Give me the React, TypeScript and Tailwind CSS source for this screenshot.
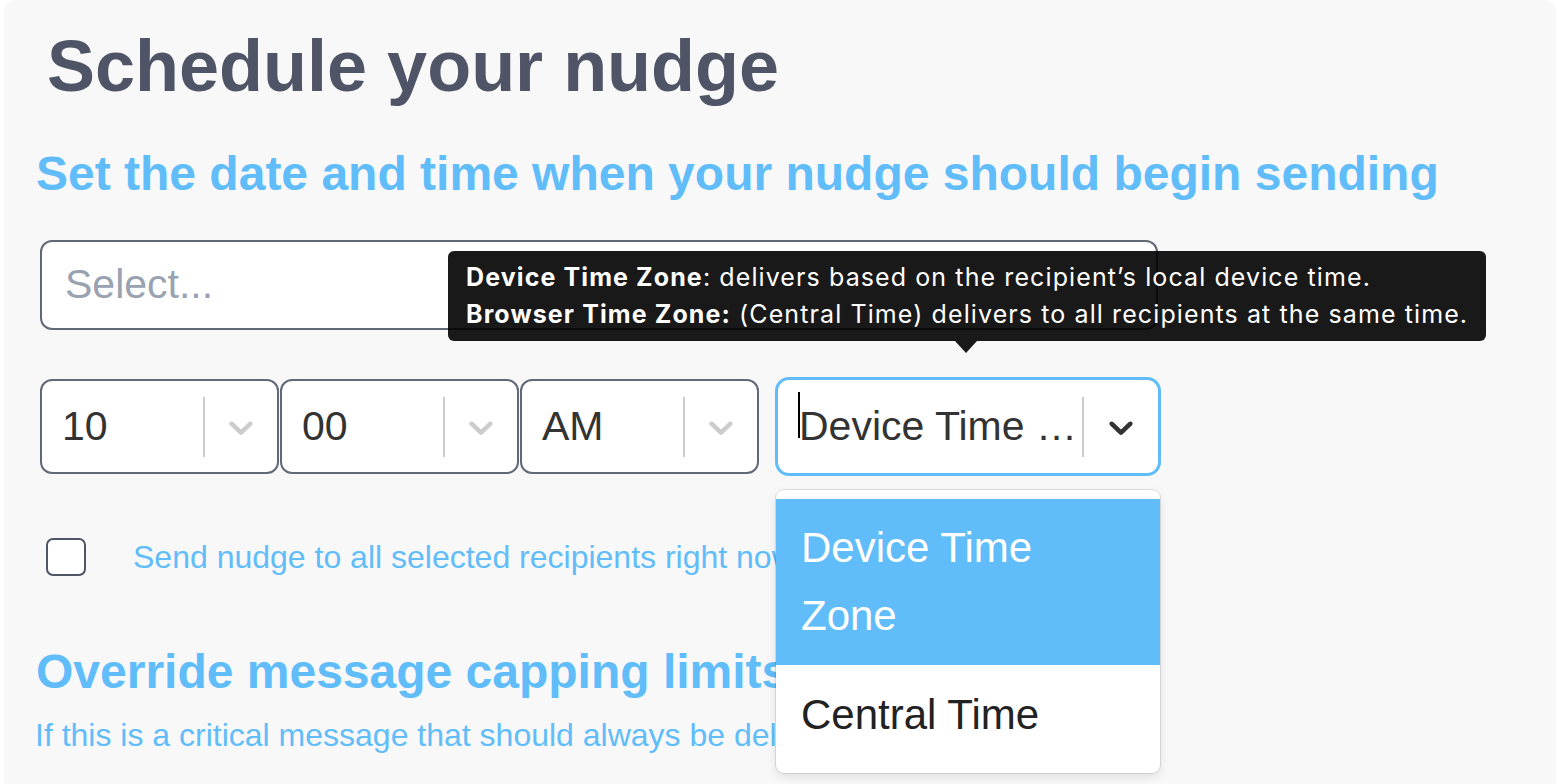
import React from 'react';

const BLUE = 'text-[#60bdf9]';

function Chevron({ dark }: { dark?: boolean }) {
  return (
    <svg width="40" height="40" viewBox="0 0 20 20" className={dark ? 'fill-[#333333]' : 'fill-[#cccccc]'}>
      <path d="M4.516 7.548c0.436-0.446 1.043-0.481 1.576 0l3.908 3.747 3.908-3.747c0.533-0.481 1.141-0.446 1.574 0 0.436 0.445 0.408 1.197 0 1.615-0.406 0.418-4.695 4.502-4.695 4.502-0.217 0.223-0.502 0.335-0.787 0.335s-0.57-0.112-0.789-0.335c0 0-4.287-4.084-4.695-4.502s-0.436-1.17 0-1.615z" />
    </svg>
  );
}

function TimeSelect({ value }: { value: string }) {
  return (
    <div className="flex h-[95px] w-[239px] items-center rounded-[12px] border-2 border-[#626875] bg-white">
      <div className="flex-1 pl-[20px] text-[41px] text-[#333333]">{value}</div>
      <div className="h-[60px] w-[2px] bg-[#cccccc]" />
      <div className="flex w-[72px] justify-center">
        <Chevron />
      </div>
    </div>
  );
}

export default function App() {
  return (
    <div className="min-h-screen bg-white pl-[4px] pr-[2px] font-['Liberation_Sans',Arial,sans-serif]">
      <div className="relative h-[784px] overflow-hidden rounded-t-[12px] bg-[#f8f8f8]">
        {/* Header */}
        <h1 className="ml-[43px] pt-[25px] text-[72px] font-bold leading-[83px] text-[#4f5566]">
          Schedule your nudge
        </h1>
        <h2 className={`ml-[32px] mt-[38px] text-[48px] font-bold leading-[55px] ${BLUE}`}>
          Set the date and time when your nudge should begin sending
        </h2>

        {/* Date picker */}
        <div className="ml-[36px] mt-[39px] flex h-[90px] w-[1118px] items-center rounded-[12px] border-2 border-[#626875] bg-white pl-[23px]">
          <span className="text-[41px] text-[#98a2b0]">Select...</span>
        </div>

        {/* Time row */}
        <div className="ml-[36px] mt-[47px] flex h-[99px] items-center gap-[1px]">
          <TimeSelect value="10" />
          <TimeSelect value="00" />
          <TimeSelect value="AM" />
          <div className="relative ml-[15px]">
            <div className="flex h-[99px] w-[386px] items-center rounded-[14px] border-[3px] border-[#60bdf9] bg-white">
              <div className="relative min-w-0 flex-1 pl-[21px] pr-[4px]">
                <div className="absolute left-[20px] top-[-4px] h-[46px] w-[2px] bg-black" />
                <div className="truncate text-[41px] text-[#333333]">Device Time Zone</div>
              </div>
              <div className="h-[60px] w-[2px] bg-[#cccccc]" />
              <div className="flex w-[74px] justify-center">
                <Chevron dark />
              </div>
            </div>

            {/* Dropdown menu */}
            <div className="absolute left-[1px] top-[113px] z-10 w-[384px] rounded-[8px] bg-white pb-[8px] pt-[9px] shadow-[0_0_0_1px_rgba(0,0,0,0.1),0_4px_11px_rgba(0,0,0,0.1)]">
              <div className="bg-[#60bdf9] py-[15px] pl-[25px] pr-[50px] text-[42px] leading-[68px] text-white">
                Device Time Zone
              </div>
              <div className="py-[16px] pl-[25px] text-[42px] leading-[68px] text-[#222222]">Central Time</div>
            </div>
          </div>
        </div>

        {/* Send now */}
        <div className="ml-[42px] mt-[57px] flex items-center gap-[47px]">
          <div className="h-[38px] w-[40px] rounded-[7px] border-2 border-[#4f5566] bg-white" />
          <span className={`text-[32px] ${BLUE}`}>Send nudge to all selected recipients right now</span>
        </div>

        {/* Capping */}
        <h2 className={`ml-[32px] mt-[63px] text-[48px] font-bold leading-[55px] ${BLUE}`}>
          Override message capping limits
        </h2>
        <p className={`ml-[31px] mt-[12px] text-[32px] ${BLUE}`}>
          If this is a critical message that should always be delivered, check here.
        </p>

        {/* Tooltip */}
        <div className="absolute left-[444px] top-[251px] z-20 whitespace-nowrap rounded-[6px] bg-black/90 px-[18px] py-[8px] font-['Inter',sans-serif] text-[25px] leading-[37px] tracking-[1.1px] text-white">
          <div>
            <span className="font-bold">Device Time Zone</span>: delivers based on the recipient’s local device time.
          </div>
          <div>
            <span className="font-bold">Browser Time Zone:</span> (Central Time) delivers to all recipients at the same time.
          </div>
          <div className="absolute left-[507px] top-full h-0 w-0 border-x-[11px] border-t-[12px] border-x-transparent border-t-black/90" />
        </div>
      </div>
    </div>
  );
}
